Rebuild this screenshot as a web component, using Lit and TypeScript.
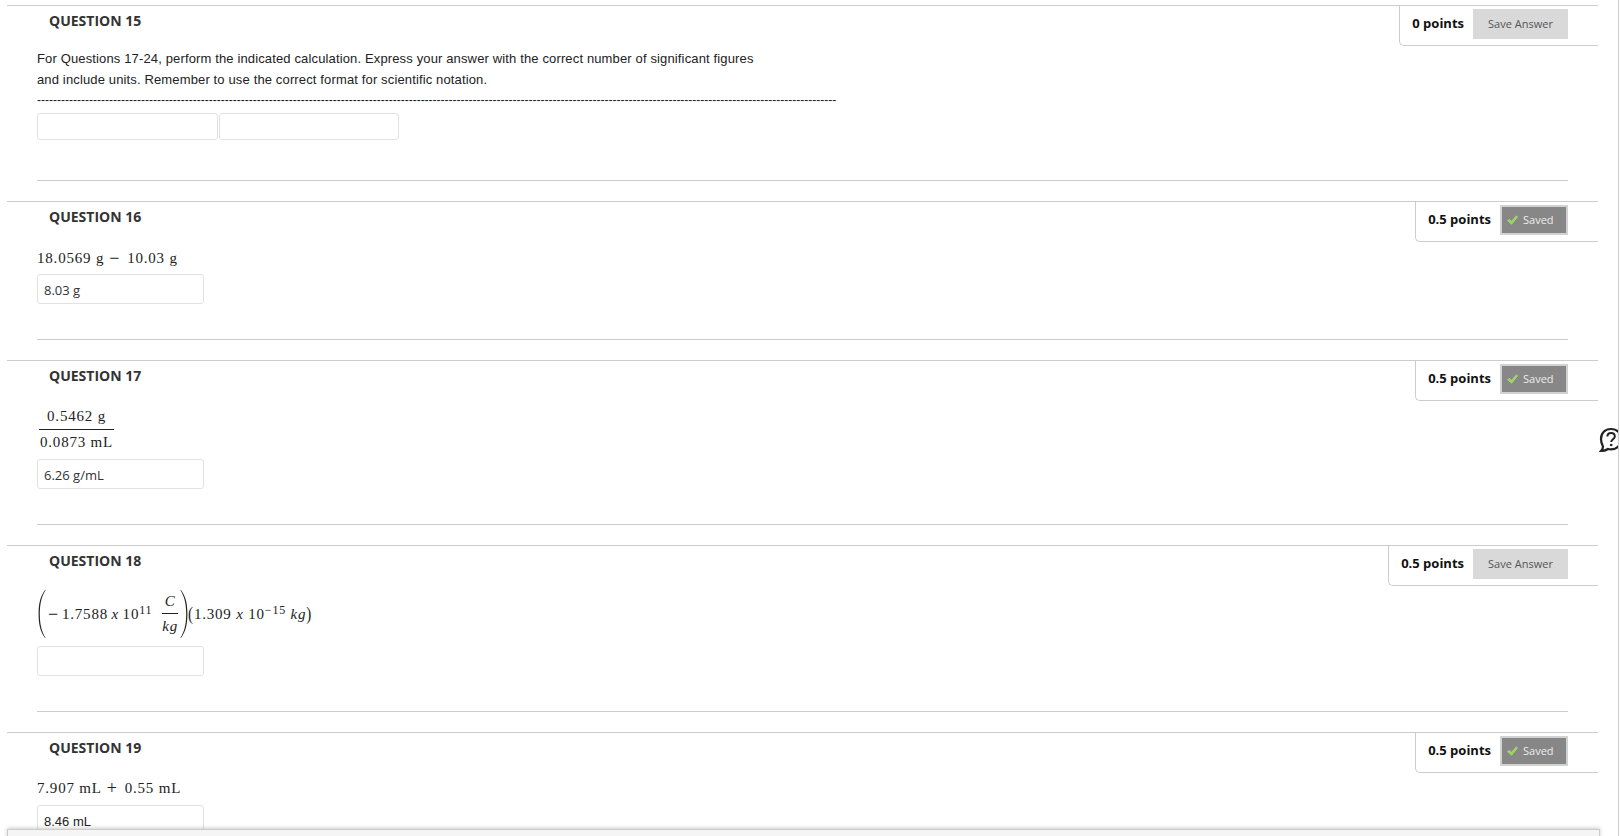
import { LitElement, html, css, svg } from "lit";
import { customElement } from "lit/decorators.js";

const bigParen = (flip: boolean) => html`<svg class="bigp ${flip ? "flip" : ""}" viewBox="0 0 8 50" width="8" height="50" aria-hidden="true"><path d="M7.6 1 C3.2 8 1.8 16 1.8 25 C1.8 34 3.2 42 7.6 49 L7 49 C1.8 42 .6 34 .6 25 C.6 16 1.8 8 7 1 Z" fill="#222"/></svg>`;

const check = svg`<path d="M.6 5.6 L2.6 4.5 L4.3 6.6 L9.4 .9 L10.6 1.8 L4.6 9.2 Z" fill="#86dc34" stroke="#d8f0c0" stroke-width=".5"/>`;

@customElement("app-root")
export class AppRoot extends LitElement {
  static styles = css`
    :host { display: block; width: 1620px; height: 836px; overflow: hidden; background: #fff; font-family: "Open Sans", sans-serif; }
    .page { position: relative; box-sizing: border-box; width: 1619px; height: 836px; overflow: hidden; border-right: 1px solid #ccc; padding: 5px 20px 0 7px; }
    .q { border-top: 1px solid #ccc; display: flex; flex-direction: column; }
    .head { display: flex; justify-content: space-between; align-items: flex-start; height: 40px; }
    .title { margin: 6px 0 0 42px; font-size: 14px; font-weight: 700; line-height: 18px; color: #333; }
    .pts { box-sizing: border-box; height: 40px; display: flex; align-items: flex-start; gap: 9px; padding: 3px 30px 0 12px; border-left: 1px solid #ccc; border-bottom: 1px solid #ccc; border-radius: 0 0 0 5px; }
    .val { font-size: 13px; font-weight: 700; color: #111; line-height: 24px; margin-top: 2px; }
    .btn { box-sizing: border-box; height: 30px; display: flex; align-items: center; font-size: 11px; line-height: 26px; }
    .save { width: 95px; background: #d9d9d9; color: #555; justify-content: center; }
    .saved { width: 68px; background: #878787; border: 2px solid #d2d2d2; color: #ececec; gap: 5px; padding-left: 5px; }
    .saved svg { flex: none; }
    .body { margin-left: 30px; width: 1531px; border-bottom: 1px solid #ccc; }
    .p { font-family: "Liberation Sans", Arial, sans-serif; font-size: 13px; line-height: 21px; color: #222; margin: 2px 0 0; letter-spacing: .14px; white-space: nowrap; }
    .dash { font-family: "Liberation Sans", Arial, sans-serif; font-size: 12px; line-height: 14px; margin-top: 3px; color: #222; white-space: nowrap; overflow: hidden; width: 800px; }
    .row { display: flex; gap: 1px; margin-top: 6px; }
    .in { box-sizing: border-box; width: 167px; height: 30px; border: 1px solid #e2e2e2; border-radius: 3px; display: flex; align-items: center; padding: 2px 0 0 6px; font-size: 13px; color: #333; background: #fff; }
    .in.w { width: 181px; height: 27px; }
    .in.w2 { width: 180px; }
    .in.ar { font-family: "Liberation Sans", Arial, sans-serif; color: #222; }
    .math { font-family: "Liberation Serif", "Times New Roman", serif; font-size: 15px; color: #222; letter-spacing: .8px; white-space: nowrap; display: flex; align-items: center; }
    .m16 { height: 26px; margin-top: 3px; }
    .m19 { height: 26px; margin-top: 2px; }
    .op { margin: 0 7px 0 5px; font-size: 18px; line-height: 20px; }
    .frac { display: inline-flex; flex-direction: column; align-items: center; }
    .num { line-height: 24px; height: 25px; }
    .den { border-top: 1px solid #222; line-height: 24px; height: 24px; padding: 0 1px; }
    .m17 { margin-top: 3px; padding-left: 2px; height: 50px; }
    .m18 { height: 50px; margin-top: 3px; padding-left: 1px; }
    .flip { transform: scaleX(-1); }
    .bigp { flex: none; }
    .it { font-style: italic; }
    sup { font-size: 12px; line-height: 0; position: relative; top: -5px; vertical-align: baseline; }
    .f18 .num { line-height: 23px; height: 23px; }
    .f18 .den { line-height: 24px; height: 25px; padding: 0; }
    .small { display: inline-block; transform: scaleY(1.2); }
    .in-16 { margin-top: 3px; }
    .in-17 { margin-top: 5px; }
    .in-18 { margin-top: 7px; }
    .in-19 { margin-top: 4px; }
    .pad1 { padding-bottom: 35px; }
    .pad2 { padding-bottom: 35px; }
    .bar { position: absolute; left: 7px; top: 829px; width: 1593px; height: 20px; box-sizing: border-box; background: #f5f5f5; border: 1px solid #ccc; box-shadow: 0 -1px 4px rgba(0,0,0,.2); }
    .help { position: absolute; left: 1599px; top: 427px; width: 24px; height: 26px; }
    .gap15 { padding-bottom: 40px; }
    .noline { border: 0; }
    .minus { margin-left: 2px; font-size: 18px; line-height: 20px; }
    .lead { margin-left: 3px; word-spacing: -1px; }
    .cfrac { margin: 0 2px 0 10px; }
  `;

  private saved() {
    return html`<div class="btn saved"><svg width="11" height="10" viewBox="0 0 11 10" aria-hidden="true">${check}</svg><span>Saved</span></div>`;
  }
  private head(n: number, pts: string, ok: boolean) {
    return html`<div class="head"><div class="title">QUESTION ${n}</div><div class="pts"><div class="val">${pts}</div>${ok ? this.saved() : html`<div class="btn save">Save Answer</div>`}</div></div>`;
  }

  render() {
    return html`<div class="page">
      <section class="q" style="height:195px">
        ${this.head(15, "0 points", false)}
        <div class="body gap15">
          <p class="p">For Questions 17-24, perform the indicated calculation. Express your answer with the correct number of significant figures<br />and include units. Remember to use the correct format for scientific notation.</p>
          <div class="dash">${"-".repeat(200)}</div>
          <div class="row"><div class="in w"></div><div class="in w w2"></div></div>
        </div>
      </section>
      <section class="q" style="height:158px">
        ${this.head(16, "0.5 points", true)}
        <div class="body pad1">
          <div class="math m16"><span>18.0569 g</span><span class="op">−</span><span>10.03 g</span></div>
          <div class="in in-16">8.03 g</div>
        </div>
      </section>
      <section class="q" style="height:184px">
        ${this.head(17, "0.5 points", true)}
        <div class="body pad2">
          <div class="math m17"><span class="frac"><span class="num">0.5462 g</span><span class="den">0.0873 mL</span></span></div>
          <div class="in in-17">6.26 g/mL</div>
        </div>
      </section>
      <section class="q" style="height:186px">
        ${this.head(18, "0.5 points", false)}
        <div class="body pad1">
          <div class="math m18 f18">${bigParen(false)}<span class="minus">−</span><span class="lead">1.7588 <i>x</i> 10<sup>11</sup></span><span class="frac cfrac"><span class="num it">C</span><span class="den it">kg</span></span>${bigParen(true)}<span class="small">(</span><span>1.309 <i>x</i> 10<sup>−15</sup> <i>kg</i></span><span class="small">)</span></div>
          <div class="in in-18"></div>
        </div>
      </section>
      <section class="q">
        ${this.head(19, "0.5 points", true)}
        <div class="body noline">
          <div class="math m19"><span>7.907 mL</span><span class="op">+</span><span>0.55 mL</span></div>
          <div class="in ar in-19">8.46 mL</div>
        </div>
      </section>
      <svg class="help" viewBox="0 0 24 26" aria-hidden="true"><path d="M12 2 C6 2 2 6 2 12 C2 16 3.5 18.5 4 19.5 C4 21 3 23 2 24 C5 24 7.5 23 9 22 C10 22.3 11 22.4 12 22.4 C18 22.4 22 18 22 12 C22 6 18 2 12 2 Z" fill="#fff" stroke="#222" stroke-width="2.2"/><path d="M8.4 9.6 C8.4 7.5 10 6 12 6 C14.2 6 15.8 7.5 15.8 9.4 C15.8 12 12.2 12.4 12.2 15" fill="none" stroke="#222" stroke-width="2"/><circle cx="12.2" cy="18" r="1.3" fill="#222"/></svg>
      <div class="bar"></div>
    </div>`;
  }
}
